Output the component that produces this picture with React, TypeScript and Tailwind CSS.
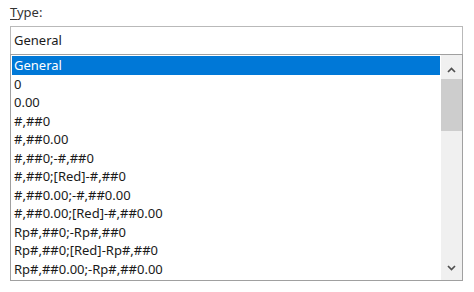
import React from 'react';

const formats = [
  'General',
  '0',
  '0.00',
  '#,##0',
  '#,##0.00',
  '#,##0;-#,##0',
  '#,##0;[Red]-#,##0',
  '#,##0.00;-#,##0.00',
  '#,##0.00;[Red]-#,##0.00',
  'Rp#,##0;-Rp#,##0',
  'Rp#,##0;[Red]-Rp#,##0',
  'Rp#,##0.00;-Rp#,##0.00',
];

const Chevron = ({ up }: { up?: boolean }) => (
  <svg width="9" height="6" viewBox="0 0 9 6" className="text-[#505050]">
    <path
      d={up ? 'M1 5 L4.5 1.5 L8 5' : 'M1 1 L4.5 4.5 L8 1'}
      fill="none"
      stroke="currentColor"
      strokeWidth="1.7"
    />
  </svg>
);

export default function App() {
  return (
    <div className="w-[474px] h-[292px] bg-white pl-[10px] pt-[3px] font-['Noto_Sans',sans-serif] text-[13px] text-[#1a1a1a]">
      {/* Label */}
      <div className="h-[23px] leading-[18px] text-[#333]">
        <span className="underline underline-offset-2">T</span>ype:
      </div>

      {/* Text box */}
      <div className="w-[453px] h-[28px] border border-[#b9b9b9] border-b-0 flex items-center pl-[3px] pt-[1px]">
        General
      </div>

      {/* List box */}
      <div className="w-[453px] h-[227px] border border-[#a0a0a0] flex">
        <div className="flex-1 pt-[1px] pl-[1px] pr-[1px]">
          {formats.map((f, i) => (
            <div
              key={f}
              className={
                'h-[18.5px] leading-[18px] pl-[2px] whitespace-nowrap ' +
                (i === 0 ? 'bg-[#0078d7] text-white' : '')
              }
            >
              {f}
            </div>
          ))}
        </div>

        {/* Scrollbar */}
        <div className="w-[21px] bg-[#f0f0f0] flex flex-col">
          <div className="h-[24px] flex items-start justify-center pt-[12px]">
            <Chevron up />
          </div>
          <div className="h-[52px] bg-[#cdcdcd]" />
          <div className="flex-1" />
          <div className="h-[24px] flex items-start justify-center pt-[9px]">
            <Chevron />
          </div>
        </div>
      </div>
    </div>
  );
}
